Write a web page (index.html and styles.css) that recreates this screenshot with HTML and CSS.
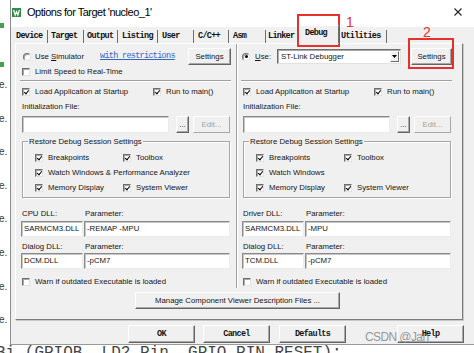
FILE: index.html
```html
<!DOCTYPE html>
<html>
<head>
<meta charset="utf-8">
<link rel="stylesheet" href="styles.css">
</head>
<body>
<div class="desk">
  <div class="gutter">
    <span class="gmark"></span>
    <span class="gmark g2"></span>
    <span class="gl first">e.</span>
    <span class="gl">e.</span>
    <span class="gl">e.</span>
    <span class="gl">e.</span>
    <span class="gl">e.</span>
    <span class="gl">e.</span>
    <span class="gl">e.</span>
    <span class="gl">e.</span>
  </div>
  <div class="window">
    <div class="titlebar">
      <svg class="appicon" width="9" height="9" viewBox="0 0 9 9"><rect width="9" height="9" fill="#2f8f46"/><path d="M1.6 2 L3.2 7 L4.5 3.6 L5.8 7 L7.4 2" stroke="#fff" stroke-width="1.2" fill="none"/></svg>
      <span class="title">Options for Target 'nucleo_1'</span>
      <svg class="close" width="8" height="8" viewBox="0 0 8 8"><path d="M0.5 0.5 L7.5 7.5 M7.5 0.5 L0.5 7.5" stroke="#222" stroke-width="1.1"/></svg>
    </div>
    <div class="client">
      <div class="tabs">
        <span class="tab t-device">Device</span>
        <span class="tab t-target">Target</span>
        <span class="tab t-output">Output</span>
        <span class="tab t-listing">Listing</span>
        <span class="tab t-user">User</span>
        <span class="tab t-cc">C/C++</span>
        <span class="tab t-asm">Asm</span>
        <span class="tab t-linker">Linker</span>
        <span class="tab active t-debug">Debug</span>
        <span class="tab t-util">Utilities</span>
      </div>
      <div class="panel">
        <div class="cols">
          <div class="col col-left">
            <div class="row r1">
              <span class="rb"></span>
              <span class="r1-label">Use <u>S</u>imulator</span>
              <a class="link">with restrictions</a>
              <button class="btn settings">Settings</button>
            </div>
            <div class="row r2"><span class="cb"></span><span>Limit Speed to Real-Time</span></div>
            <div class="hsep"></div>
            <div class="row r3">
              <span class="opt load"><span class="cb on"></span>Load Application at Startup</span>
              <span class="opt"><span class="cb on"></span>Run to main()</span>
            </div>
            <div class="row r4">Initialization File:</div>
            <div class="row r5">
              <span class="field init"></span>
              <button class="btn dots">...</button>
              <button class="btn edit">Edit...</button>
            </div>
            <div class="group">
              <span class="gtitle">Restore Debug Session Settings</span>
              <div class="grow first"><span class="opt gfirst"><span class="cb on"></span>Breakpoints</span><span class="opt"><span class="cb on"></span>Toolbox</span></div>
              <div class="grow"><span class="opt"><span class="cb on"></span>Watch Windows &amp; Performance Analyzer</span></div>
              <div class="grow"><span class="opt gfirst"><span class="cb on"></span>Memory Display</span><span class="opt"><span class="cb on"></span>System Viewer</span></div>
            </div>
            <div class="dll">
              <span class="dlabel">CPU DLL:</span><span class="dlabel p">Parameter:</span>
              <span class="field dfield">SARMCM3.DLL</span><span class="field dfield">-REMAP -MPU</span>
              <span class="dlabel l2">Dialog DLL:</span><span class="dlabel p l2">Parameter:</span>
              <span class="field dfield f2">DCM.DLL</span><span class="field dfield f2">-pCM7</span>
            </div>
            <div class="row warn"><span class="cb"></span><span>Warn if outdated Executable is loaded</span></div>
          </div>
          <div class="vsep"></div>
          <div class="col col-right">
            <div class="row r1">
              <span class="rb on"></span>
              <span class="use-label"><u>U</u>se:</span>
              <span class="select">ST-Link Debugger<span class="arrow"><svg width="5" height="3" viewBox="0 0 5 3"><path d="M0 0 H5 L2.5 3 Z" fill="#000"/></svg></span></span>
              <button class="btn settings">Settings</button>
            </div>
            <div class="row r2"></div>
            <div class="hsep"></div>
            <div class="row r3">
              <span class="opt load"><span class="cb on"></span>Load Application at Startup</span>
              <span class="opt"><span class="cb on"></span>Run to main()</span>
            </div>
            <div class="row r4">Initialization File:</div>
            <div class="row r5">
              <span class="field init"></span>
              <button class="btn dots">...</button>
              <button class="btn edit">Edit...</button>
            </div>
            <div class="group">
              <span class="gtitle">Restore Debug Session Settings</span>
              <div class="grow first"><span class="opt gfirst"><span class="cb on"></span>Breakpoints</span><span class="opt"><span class="cb on"></span>Toolbox</span></div>
              <div class="grow"><span class="opt"><span class="cb on"></span>Watch Windows</span></div>
              <div class="grow"><span class="opt gfirst"><span class="cb on"></span>Memory Display</span><span class="opt"><span class="cb on"></span>System Viewer</span></div>
            </div>
            <div class="dll">
              <span class="dlabel">Driver DLL:</span><span class="dlabel p">Parameter:</span>
              <span class="field dfield">SARMCM3.DLL</span><span class="field dfield">-MPU</span>
              <span class="dlabel l2">Dialog DLL:</span><span class="dlabel p l2">Parameter:</span>
              <span class="field dfield f2">TCM.DLL</span><span class="field dfield f2">-pCM7</span>
            </div>
            <div class="row warn"><span class="cb"></span><span>Warn if outdated Executable is loaded</span></div>
          </div>
        </div>
        <button class="btn manage">Manage Component Viewer Description Files ...</button>
      </div>
      <div class="actions">
        <button class="btn act">OK</button>
        <button class="btn act">Cancel</button>
        <button class="btn act defaults">Defaults</button>
        <button class="btn act help">Help</button>
      </div>
    </div>
    <span class="redbox box1"></span>
    <span class="num n1">1</span>
    <span class="redbox box2"></span>
    <span class="num n2">2</span>
    <span class="wm">CSDN @Jan</span>
  </div>
</div>
<div class="code">Bi (GPIOB, LD2_Pin, GPIO_PIN_RESET);</div>
</body>
</html>
```
FILE: styles.css
```css
* { box-sizing: border-box; margin: 0; padding: 0; }
html, body { width: 474px; height: 353px; overflow: hidden; background: #fff; }
body {
  font-family: "Liberation Sans", Arial, sans-serif;
  font-size: 7.8px;
  line-height: 11px;
  color: #151515;
}
u { text-decoration: underline; }

.desk { display: flex; height: 345px; }

/* editor strip behind the dialog */
.gutter {
  width: 10px;
  flex: none;
  display: flex;
  flex-direction: column;
  padding-top: 23px;
  overflow: hidden;
  color: #3a3a3a;
  font-size: 10px;
}
.gmark { flex: none; width: 4px; height: 5px; background: #46a04c; }
.gmark.g2 { margin-top: 34px; }
.gl { flex: none; height: 33.6px; line-height: 33.6px; margin-left: -1px; white-space: nowrap; }
.gl.first { margin-top: 1px; }

/* dialog window */
.window {
  position: relative;
  width: 464px;
  height: 345px;
  flex: none;
  background: #f0f0f0;
  border-left: 1px solid #8c8c8c;
  border-bottom: 1px solid #9a9a9a;
  display: flex;
  flex-direction: column;
}
.titlebar {
  flex: none;
  height: 27px;
  background: #fff;
  display: flex;
  align-items: center;
  padding: 0 0 3px 1px;
}
.appicon { display: block; flex: none; }
.title {
  margin-left: 6px;
  font-size: 11px;
  letter-spacing: -0.5px;
  color: #000;
  white-space: nowrap;
}
.close { margin-left: auto; margin-right: 12px; display: block; }

.client { flex: 1; display: flex; flex-direction: column; padding-left: 4px; }

/* tabs */
.tabs {
  flex: none;
  height: 16px;
  display: flex;
  align-items: flex-end;
  font-family: "Liberation Mono", monospace;
  font-size: 8.5px;
  font-weight: bold;
  letter-spacing: -0.7px;
  color: #111;
}
.tab {
  height: 13px;
  line-height: 13px;
  white-space: nowrap;
  border-right: 1px solid #6d6d6d;
  flex: none;
}
.t-device { width: 33px; padding-left: 1px; }
.t-target { width: 36px; padding-left: 3px; }
.t-output { width: 34px; padding-left: 3px; }
.t-listing { width: 40px; padding-left: 4px; }
.t-user { width: 36px; padding-left: 4px; }
.t-cc { width: 35px; padding-left: 4px; }
.t-asm { width: 37px; padding-left: 4px; }
.t-linker { width: 33px; padding-left: 2px; border-right: none; }
.t-debug { width: 40px; padding-left: 5px; }
.t-util { width: 48px; padding-left: 2px; }
.tab.active {
  height: 19px;
  margin-bottom: -1px;
  padding-top: 1px;
  background: #f0f0f0;
  border: 1px solid;
  border-color: #fff #6d6d6d transparent #fff;
  position: relative;
  z-index: 1;
}

/* tab page */
.panel {
  flex: none;
  width: 448px;
  height: 277px;
  border: 1px solid;
  border-color: #fff #7d7d7d #7d7d7d #fff;
  box-shadow: 1px 1px 0 #c8c8c8;
  padding-bottom: 10px;
}
.cols {
  display: grid;
  grid-template-columns: 220px 2px 224px;
  height: 244px;
}
.col { display: flex; flex-direction: column; padding-top: 4px; }
.col-left { padding-left: 6px; padding-right: 5px; }
.col-right { padding-left: 5px; padding-right: 10px; }
.vsep { border-left: 1px solid #a0a0a0; border-right: 1px solid #fff; }

.row { display: flex; align-items: center; white-space: nowrap; flex: none; }
.r1 { height: 17px; }
.r2 { height: 11px; margin-top: 1px; }
.hsep {
  flex: none;
  height: 2px;
  margin: 3px 0 0 -2px;
  width: 211px;
  border-top: 1px solid #a0a0a0;
  border-bottom: 1px solid #fff;
}
.r3 { height: 11px; margin-top: 4px; }
.r4 { height: 11px; margin-top: 4px; }
.r5 { height: 17px; margin-top: 4px; }
.warn { height: 11px; margin-top: 7px; }

.r1-label { margin-left: 4px; width: 65px; }
.col-right .rb { margin-left: -1px; }
.col-left .rb { margin-left: 1px; }
.use-label { margin-left: 5px; width: 22px; }

.link {
  font-family: "Liberation Mono", monospace;
  font-size: 8.5px;
  letter-spacing: -0.7px;
  color: #2f66c8;
  text-decoration: underline;
}

.opt { display: flex; align-items: center; white-space: nowrap; }
.r3 .load { width: 131px; }

/* controls */
.cb, .rb {
  flex: none;
  width: 8px;
  height: 8px;
  background: #fff;
  border: 1px solid;
  border-color: #6e6e6e #e2e2e2 #e2e2e2 #6e6e6e;
  box-shadow: inset 1px 1px 0 #a8a8a8;
  display: flex;
  align-items: center;
  justify-content: center;
  margin-right: 5px;
}
.rb { border-radius: 50%; margin-right: 0; }
.cb.on::after {
  content: "";
  width: 2px;
  height: 4px;
  margin-top: -1px;
  border: solid #000;
  border-width: 0 1.4px 1.4px 0;
  transform: rotate(40deg);
}
.rb.on::after {
  content: "";
  width: 3px;
  height: 3px;
  border-radius: 50%;
  background: #000;
}

.btn {
  flex: none;
  height: 17px;
  display: flex;
  align-items: center;
  justify-content: center;
  background: #f0f0f0;
  border: 1px solid;
  border-color: #fff #646464 #646464 #fff;
  box-shadow: inset -1px -1px 0 #a8a8a8;
  font: inherit;
  color: #151515;
  white-space: nowrap;
}
.settings { margin-left: auto; width: 43px; }
.col-right .settings { width: 41px; }
.dots { width: 13px; margin-left: 7px; }
.edit { width: 37px; margin-left: 4px; color: #a3a3a3; border-color: #fff #a8a8a8 #a8a8a8 #fff; box-shadow: none; }

.field {
  display: block;
  height: 16px;
  background: #fff;
  border: 1px solid;
  border-color: #8a8a8a #ececec #ececec #8a8a8a;
  box-shadow: inset 1px 1px 0 #c6c6c6;
  padding-left: 2px;
  line-height: 14px;
  white-space: nowrap;
  overflow: hidden;
}
.init { width: 147px; height: 17px; }

.select {
  flex: none;
  width: 124px;
  height: 15px;
  background: #fff;
  border: 1px solid;
  border-color: #6e6e6e #e2e2e2 #e2e2e2 #6e6e6e;
  box-shadow: inset 1px 1px 0 #a8a8a8;
  display: flex;
  align-items: center;
  padding-left: 3px;
}
.arrow {
  margin-left: auto;
  margin-right: 1px;
  width: 9px;
  height: 11px;
  background: #f0f0f0;
  border: 1px solid;
  border-color: #fff #6e6e6e #6e6e6e #fff;
  display: flex;
  align-items: center;
  justify-content: center;
}
.arrow svg { display: block; }

/* group box */
.group {
  flex: none;
  width: 208px;
  height: 57px;
  margin-top: 8px;
  border: 1px solid #a6a6a6;
  box-shadow: 1px 1px 0 #fff, inset 1px 1px 0 #fff;
  display: flex;
  flex-direction: column;
}
.gtitle {
  align-self: flex-start;
  margin: -6px 0 0 5px;
  padding: 0 1px;
  background: #f0f0f0;
  line-height: 11px;
  white-space: nowrap;
}
.grow { display: flex; align-items: center; height: 15px; padding-left: 12px; flex: none; }
.grow.first { margin-top: 3px; }
.gfirst { width: 88px; }

/* DLL fields */
.dll {
  flex: none;
  display: grid;
  grid-template-columns: 62px 146px;
  column-gap: 1px;
  margin: 10px 0 0 -1px;
}
.dlabel { height: 11px; line-height: 11px; padding-left: 1px; margin-bottom: 2px; white-space: nowrap; }
.dlabel.p { padding-left: 1px; }
.dlabel.l2 { margin-top: 4px; margin-bottom: 1px; }

.manage {
  width: 205px;
  margin: 4px 0 0 119px;
}

/* bottom buttons */
.actions {
  flex: none;
  display: flex;
  height: 18px;
  margin: 5px 10px 0 113px;
}
.act {
  width: 67px;
  height: 18px;
  font-family: "Liberation Mono", monospace;
  font-size: 8.5px;
  font-weight: bold;
  letter-spacing: -0.7px;
}
.act + .act { margin-left: 8px; }
.act.defaults { margin-left: 9px; }
.act.help { margin-left: auto; }

/* annotations over the screenshot */
.redbox { position: absolute; border: 2px solid #e5302b; }
.box1 { left: 286px; top: 14px; width: 43px; height: 33px; }
.box2 { left: 397px; top: 38px; width: 46px; height: 31px; }
.num {
  position: absolute;
  font-family: "Liberation Sans", Arial, sans-serif;
  font-size: 14px;
  line-height: 14px;
  color: #e5302b;
}
.n1 { left: 335px; top: 15px; }
.n2 { left: 412px; top: 25px; }
.wm {
  position: absolute;
  left: 354px;
  top: 331px;
  font-size: 12px;
  line-height: 12px;
  letter-spacing: -0.6px;
  color: rgba(120, 120, 120, 0.75);
  white-space: nowrap;
}

.code {
  font-family: "Liberation Mono", monospace;
  font-size: 16px;
  line-height: 17px;
  color: #444;
  margin-left: -4px;
  white-space: nowrap;
}
```
